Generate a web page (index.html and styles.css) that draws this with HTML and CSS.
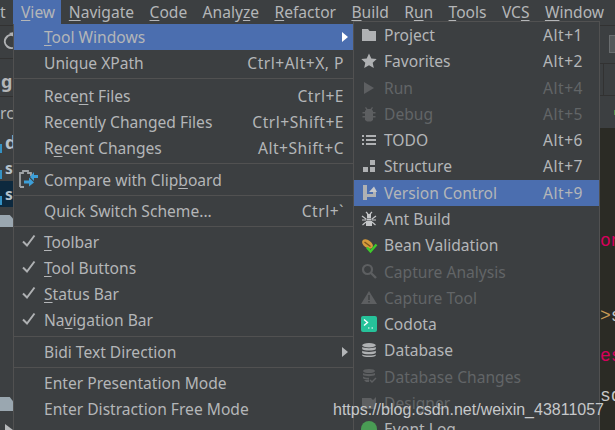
FILE: index.html
```html
<!DOCTYPE html>
<html lang="en">
<head>
<meta charset="utf-8">
<title>IDE View menu</title>
<link rel="stylesheet" href="styles.css">
</head>
<body>
<div class="app">
  <nav class="menubar">
    <span class="mi edge">t</span>
    <span class="mi active"><u>V</u>iew</span>
    <span class="mi"><u>N</u>avigate</span>
    <span class="mi"><u>C</u>ode</span>
    <span class="mi">Analy<u>z</u>e</span>
    <span class="mi"><u>R</u>efactor</span>
    <span class="mi"><u>B</u>uild</span>
    <span class="mi">R<u>u</u>n</span>
    <span class="mi"><u>T</u>ools</span>
    <span class="mi">VC<u>S</u></span>
    <span class="mi"><u>W</u>indow</span>
  </nav>
  <div class="workspace">
    <aside class="tree">
      <div class="tree-bar"><svg class="refresh" width="13" height="20" viewBox="0 0 13 20"><path d="M9 3.500 A6.500 6.500 0 1 0 11 14" fill="none" stroke="#afb1b3" stroke-width="2" transform="translate(2 1)"/><path d="M6 2 L13 0.500 L12 7 Z" fill="#afb1b3"/></svg></div>
      <div class="tree-bar path"><span class="path-text">g·</span></div>
      <div class="tree-row rc">rc</div>
      <div class="tree-row node d mark">d</div>
      <div class="tree-row node mark">sp</div>
      <div class="tree-row node mark sel">sp</div>
      <div class="file"></div>
      <div class="file lower"></div>
      <div class="tri"></div>
    </aside>
    <main class="right">
      <div class="toolbar"><span class="tool-btn"></span></div>
      <div class="tabs"><span class="tab-divider"></span><span class="tab-mark"></span></div>
      <div class="editor">
        <div class="code pink l1">on</div>
        <div class="code l2"><span class="chev">&gt;</span>s</div>
        <div class="code pink l3">es</div>
        <div class="code l3">sq</div>
        <div class="code pink l3">on</div>
      </div>
    </main>
  </div>

  <div class="menu main-menu">
    <div class="row hl"><span class="lbl"><u>T</u>ool Windows</span><span class="arrow white"></span></div>
    <div class="row"><span class="lbl">Unique XPath</span><span class="key">Ctrl+Alt+X, P</span></div>
    <div class="sep wide"></div>
    <div class="row"><span class="lbl">Rece<u>n</u>t Files</span><span class="key">Ctrl+E</span></div>
    <div class="row"><span class="lbl">Recently Changed Files</span><span class="key">Ctrl+Shift+E</span></div>
    <div class="row"><span class="lbl">R<u>e</u>cent Changes</span><span class="key">Alt+Shift+C</span></div>
    <div class="sep"></div>
    <div class="row">
      <svg class="ic compare" width="20" height="20" viewBox="0 0 20 20"><path d="M2 18V4h3V2h5v2h3v3M2 18h4" fill="none" stroke="#9fa3a6" stroke-width="1.800"/><path d="M5 12.500h5v-3l5 5-5 4v-3H5z" fill="#3d9fd8" transform="translate(1 -1)"/><path d="M20 9h-4v3l-4-4 4-5v3h4z" fill="#3d9fd8"/></svg>
      <span class="lbl">Compare with Clip<u>b</u>oard</span>
    </div>
    <div class="sep"></div>
    <div class="row"><span class="lbl">Quick Switch Scheme...</span><span class="key">Ctrl+`</span></div>
    <div class="sep"></div>
    <div class="row"><svg class="ic check" width="16" height="14" viewBox="0 0 16 14"><path d="M2 7.500 L6 11.500 L13.500 1.500" fill="none" stroke="#afb1b3" stroke-width="2"/></svg><span class="lbl"><u>T</u>oolbar</span></div>
    <div class="row"><svg class="ic check" width="16" height="14" viewBox="0 0 16 14"><path d="M2 7.500 L6 11.500 L13.500 1.500" fill="none" stroke="#afb1b3" stroke-width="2"/></svg><span class="lbl"><u>T</u>ool Buttons</span></div>
    <div class="row"><svg class="ic check" width="16" height="14" viewBox="0 0 16 14"><path d="M2 7.500 L6 11.500 L13.500 1.500" fill="none" stroke="#afb1b3" stroke-width="2"/></svg><span class="lbl"><u>S</u>tatus Bar</span></div>
    <div class="row"><svg class="ic check" width="16" height="14" viewBox="0 0 16 14"><path d="M2 7.500 L6 11.500 L13.500 1.500" fill="none" stroke="#afb1b3" stroke-width="2"/></svg><span class="lbl">Na<u>v</u>igation Bar</span></div>
    <div class="sep"></div>
    <div class="row"><span class="lbl">Bidi Text Direction</span><span class="arrow"></span></div>
    <div class="sep"></div>
    <div class="row"><span class="lbl">Enter Presentation Mode</span></div>
    <div class="row"><span class="lbl">Enter Distraction Free Mode</span></div>
  </div>

  <div class="menu sub-menu">
    <div class="row"><svg class="sic" width="16" height="16" viewBox="0 0 16 16"><path d="M1 2h6l1.500 2H15v10H1z" fill="#afb1b3"/></svg><span class="lbl">Project</span><span class="key">Alt+1</span></div>
    <div class="row"><svg class="sic" width="16" height="16" viewBox="0 0 16 16"><path d="M8 0.500l2.300 5 5.400.600-4 3.600 1.100 5.300L8 12.300 3.200 15l1.100-5.300-4-3.600 5.400-.600z" fill="#afb1b3"/></svg><span class="lbl">Favorites</span><span class="key">Alt+2</span></div>
    <div class="row off"><svg class="sic" width="16" height="16" viewBox="0 0 16 16"><path d="M3 2 L13 8 L3 14Z" fill="#5d5f61"/></svg><span class="lbl">Run</span><span class="key">Alt+4</span></div>
    <div class="row off"><svg class="sic" width="16" height="16" viewBox="0 0 16 16"><path d="M5 1l1.500 2h3L11 1l1 .700L10.800 3.500 12 5v9l-2 1.500H6L4 14V5l1.200-1.500L4 1.700zM1.500 6H4v1.500H1.500zM12 6h2.500v1.500H12zM1.500 10H4v1.500H1.500zM12 10h2.500v1.500H12z" fill="#5d5f61"/></svg><span class="lbl">Debug</span><span class="key">Alt+5</span></div>
    <div class="row"><svg class="sic" width="16" height="16" viewBox="0 0 16 16"><path d="M1 3h2v2H1zM5 3h10v2H5zM1 7h2v2H1zM5 7h10v2H5zM1 11h2v2H1zM5 11h10v2H5z" fill="#afb1b3"/></svg><span class="lbl">TODO</span><span class="key">Alt+6</span></div>
    <div class="row"><svg class="sic" width="16" height="16" viewBox="0 0 16 16"><path d="M9 2h5v5H9zM2 9h5v5H2zM9 9h5v5H9z" fill="#afb1b3"/></svg><span class="lbl">Structure</span><span class="key">Alt+7</span></div>
    <div class="row hl"><svg class="sic" width="16" height="16" viewBox="0 0 16 16"><path d="M2 0h4v15H2zM6 9h6V7h3v5H6z" fill="#afb1b3"/><path d="M13 1.500l3 5.500H8z" fill="#c7c9cb"/></svg><span class="lbl">Version Control</span><span class="key">Alt+9</span></div>
    <div class="row"><svg class="sic" width="16" height="16" viewBox="0 0 16 16"><path d="M6 3h4v4H6zM5.500 7.500h5v2h-5zM5 10h6v5H5z" fill="#c4c6c8"/><path d="M5 1l2 2M11 1L9 3M1 5l4 3M15 5l-4 3M1 9h4M15 9h-4M1.500 14L5 11M14.500 14L11 11" stroke="#c4c6c8" stroke-width="1.200"/></svg><span class="lbl">Ant Build</span></div>
    <div class="row"><svg class="sic" width="17" height="17" viewBox="0 0 17 17"><ellipse cx="6.500" cy="7" rx="6" ry="3.800" transform="rotate(35 6.500 7)" fill="#d59a3b"/><path d="M3.500 5l6 4.500" stroke="#7a5520" stroke-width="1.500"/><path d="M6 10.500l3.500 4L15.500 7.500" fill="none" stroke="#3ecb2c" stroke-width="2.400"/></svg><span class="lbl">Bean Validation</span></div>
    <div class="row off"><svg class="sic" width="16" height="16" viewBox="0 0 16 16"><circle cx="6.500" cy="6.500" r="4.500" fill="none" stroke="#5d5f61" stroke-width="2.200"/><path d="M10 10l5 5" stroke="#5d5f61" stroke-width="2.400"/></svg><span class="lbl">Capture Analysis</span></div>
    <div class="row off"><svg class="sic" width="16" height="16" viewBox="0 0 16 16"><path d="M8 1 L16 14H0Z" fill="#5d5f61"/><path d="M7.300 5h1.400v5H7.300zM7.300 11h1.400v1.500H7.300z" fill="#3c3f41"/></svg><span class="lbl">Capture Tool</span></div>
    <div class="row"><svg class="sic" width="16" height="16" viewBox="0 0 16 16"><rect width="16" height="16" rx="2" fill="#26c29a"/><path d="M3 3.500l3.500 3L3 9.500" fill="none" stroke="#fff" stroke-width="1.400"/><path d="M7 12h1.500M10.500 12H12" stroke="#fff" stroke-width="1.200"/></svg><span class="lbl">Codota</span></div>
    <div class="row"><svg class="sic" width="16" height="16" viewBox="0 0 16 16"><ellipse cx="8" cy="3.200" rx="6.800" ry="2.200" fill="#afb1b3"/><path d="M1.200 5c1.500 1.500 12 1.500 13.600 0v2.200c-1.500 1.800-12 1.800-13.600 0zM1.200 8.800c1.500 1.500 12 1.500 13.600 0V11c-1.500 1.800-12 1.800-13.600 0zM1.200 12.400c1.500 1.500 12 1.500 13.600 0v1c-1.500 2-12 2-13.600 0z" fill="#afb1b3"/></svg><span class="lbl">Database</span></div>
    <div class="row off"><svg class="sic" width="16" height="16" viewBox="0 0 16 16"><ellipse cx="8" cy="3" rx="6" ry="2" fill="#5d5f61"/><path d="M2 5c1.500 1.300 10.500 1.300 12 0v2c-1.500 1.500-10.500 1.500-12 0zM2 8.500c1 1 4 1.300 6 1.200v2c-2 0-5-.400-6-1.400zM3 12h5v2H5z" fill="#5d5f61"/><path d="M9 12l2 2 4-4" fill="none" stroke="#5d5f61" stroke-width="1.500"/></svg><span class="lbl">Database Changes</span></div>
    <div class="row off"><svg class="sic" width="16" height="16" viewBox="0 0 16 16"><path d="M1 3h9l2 2 3-3v12H1z" fill="#5d5f61"/></svg><span class="lbl">Designer</span></div>
    <div class="row"><svg class="sic" width="16" height="16" viewBox="0 0 16 16"><circle cx="8" cy="8" r="8" fill="#499c54"/></svg><span class="lbl">Event Log</span></div>
  </div>

  <div class="watermark">https://blog.csdn.net/weixin_43811057</div>
</div>
</body>
</html>
```
FILE: styles.css
```css
* { box-sizing: border-box; }
html, body { margin: 0; padding: 0; }
body { width: 615px; height: 430px; overflow: hidden; background: #3c3f41; }
.app { position: relative; width: 615px; height: 430px; overflow: hidden; font-family: "Noto Sans", sans-serif; font-size: 15.6px; color: #b4b6b8; display: flex; flex-direction: column; }
u { text-underline-offset: 2px; text-decoration-thickness: 1px; }

.menubar { display: flex; height: 26px; flex: none; align-items: flex-start; background: #3c3f41; line-height: 24px; border-bottom: 1px solid #323232; }
.mi { padding: 0 7.7px; white-space: nowrap; }
.mi.edge { width: 13px; padding: 0; }
.mi.active { background: #4b6eaf; height: 24px; padding: 0 6px 0 8px; }

.workspace { flex: 1; display: flex; justify-content: space-between; min-height: 0; }
.tree { width: 13px; overflow: hidden; background: #3c3f41; }
.tree-bar { height: 33px; border-bottom: 1px solid #323232; overflow: hidden; }
.tree-bar.path { height: 38px; padding-left: 1px; font-size: 18px; font-weight: 700; line-height: 44px; }
.path-text { white-space: nowrap; }
.refresh { display: block; margin: 5px 0 0 3px; }
.tree-row { position: relative; height: 26px; line-height: 26px; white-space: nowrap; overflow: hidden; }
.tree-row.rc { margin-top: 3px; }
.tree-row.d { margin-top: 3px; font-size: 18px; }
.tree-row.node { padding-left: 5px; font-weight: 700; color: #b4c0ca; }
.tree-row.mark::before { content: ""; position: absolute; left: 0; top: 15px; width: 2px; height: 9px; background: #3592c4; }
.tree-row.sel { background: #0d293e; }
.file { width: 13px; height: 12px; margin-top: 8px; background: #9aa7b0; clip-path: polygon(0 0, 75% 0, 100% 30%, 100% 100%, 0 100%); }
.file.lower { margin-top: 170px; height: 14px; }
.tri { width: 0; height: 0; margin: 13px 0 0 5px; border-left: 8px solid #b8babc; border-top: 6px solid transparent; border-bottom: 6px solid transparent; }

.right { width: 15px; display: flex; flex-direction: column; }
.toolbar { height: 38px; flex: none; padding-top: 9px; border-bottom: 1px solid #323232; }
.tool-btn { display: block; width: 8px; height: 18px; margin-left: 9px; background: #55585a; border: 1px solid #6a6d6f; }
.tabs { position: relative; height: 32px; flex: none; border-bottom: 1px solid #323232; }
.tab-divider { position: absolute; left: 3px; top: 0; bottom: 0; width: 1px; background: #323232; }
.tab-mark { position: absolute; left: 14px; top: 46px; width: 1px; height: 5px; background: #4f8a4a; }
.editor { flex: 1; background: #2b2b25; border-top: 32px solid #3c3f41; font-family: "Liberation Mono", monospace; font-size: 18px; color: #c8c8c8; white-space: nowrap; overflow: hidden; }
.code { height: 26px; line-height: 26px; }
.pink { color: #d6005c; }
.chev { color: #c79a55; }
.l1 { margin-top: 100px; }
.l2 { margin-top: 49px; }
.l3 { margin-top: 14px; }

.menu { position: absolute; background: #3c3f41; border: 1px solid #515151; }
.main-menu { left: 13px; top: 24px; width: 341px; height: 420px; border-top: 0; border-right: 0; }
.sub-menu { left: 353px; top: 21px; width: 247px; height: 430px; }
.row { height: 26.27px; display: flex; align-items: center; position: relative; white-space: nowrap; }
.main-menu .row { height: 26.2px; padding: 0 10px 0 30px; }
.sub-menu .row { padding: 0 16px 0 30px; }
.lbl { flex: 1; }
.key { flex: none; letter-spacing: .5px; }
.row.hl { background: #4b6eaf; }
.row.off { color: #626567; }
.sep { height: 5px; padding-top: 2px; }
.sep.wide { height: 6.5px; }
.sep::before { content: ""; display: block; height: 1px; background: #515151; }
.arrow { width: 0; height: 0; margin-right: -4px; border-left: 6px solid #b4b6b8; border-top: 5px solid transparent; border-bottom: 5px solid transparent; }
.arrow.white { border-left-color: #fff; }
.ic { position: absolute; }
.compare { left: 4px; top: 3px; }
.check { left: 7px; top: 5px; }
.sic { position: absolute; left: 7px; top: 5px; }

.watermark { position: absolute; left: 333px; top: 401px; font-family: "Liberation Sans", sans-serif; font-size: 16px; line-height: 18px; color: #c6c8ca; white-space: nowrap; }
```
